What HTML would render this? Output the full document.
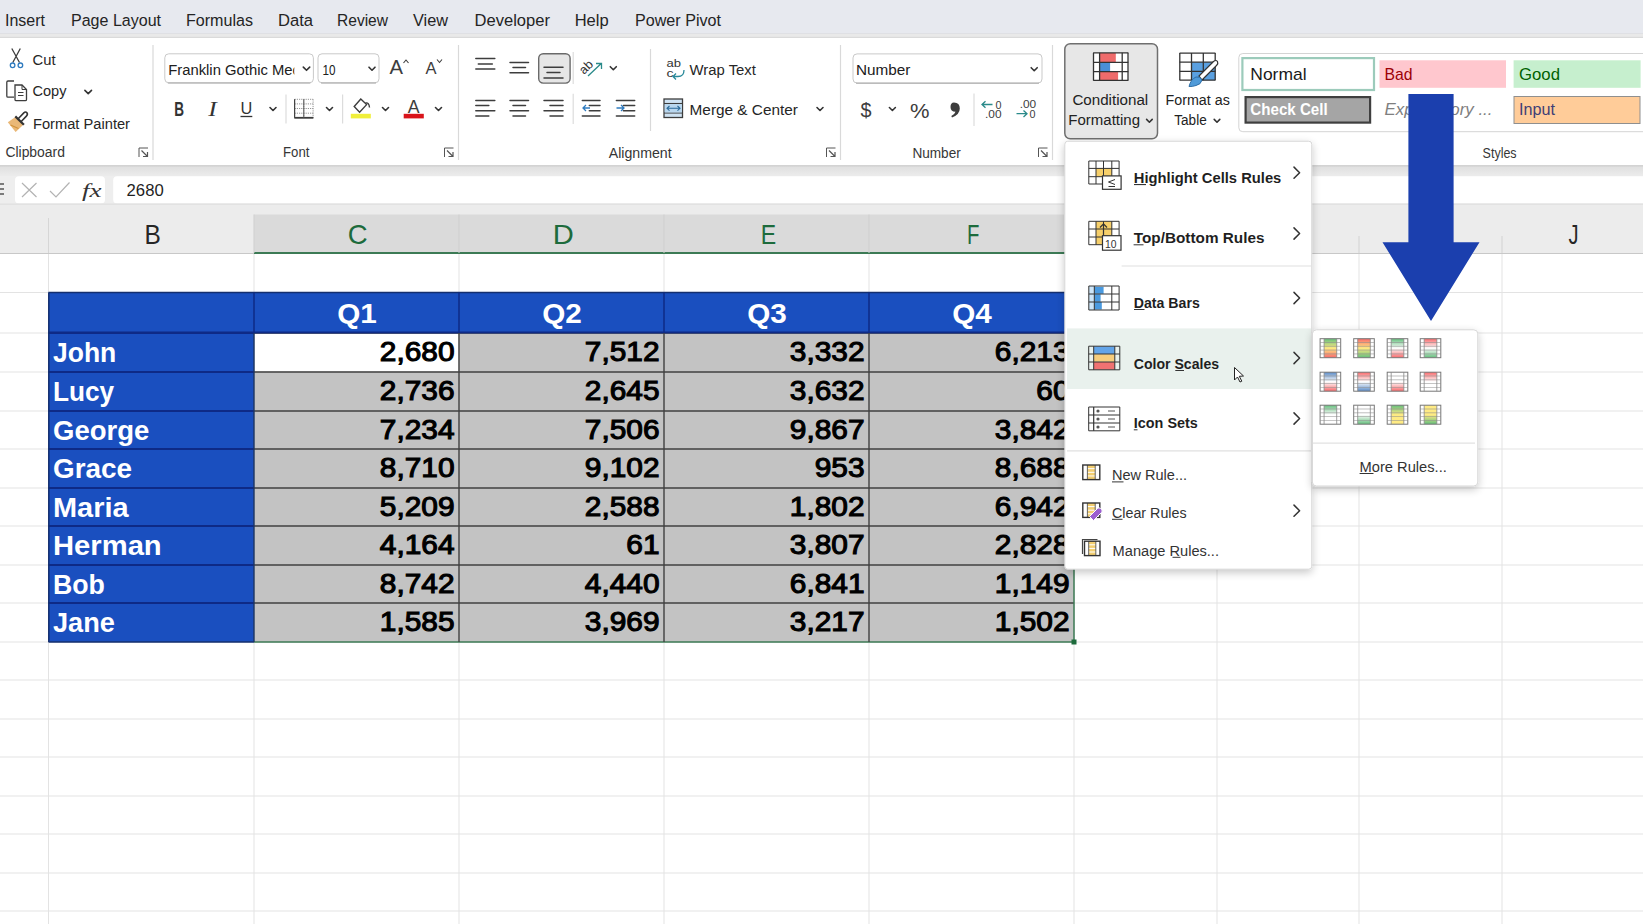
<!DOCTYPE html>
<html><head><meta charset="utf-8">
<style>
html,body{margin:0;padding:0;}
body{width:1643px;height:924px;overflow:hidden;background:#fff;}
svg{display:block;font-family:'Liberation Sans',sans-serif;}
</style></head><body>
<svg width="1643" height="924" viewBox="0 0 1643 924">
<defs>
<filter id="sh" x="-10%" y="-10%" width="130%" height="130%"><feGaussianBlur in="SourceAlpha" stdDeviation="4"/><feOffset dx="0" dy="3"/><feComponentTransfer><feFuncA type="linear" slope="0.22"/></feComponentTransfer><feMerge><feMergeNode/><feMergeNode in="SourceGraphic"/></feMerge></filter>
</defs>

<rect x="0" y="0" width="1643" height="38" fill="#e7e9ef"/>
<rect x="0" y="33" width="1643" height="5" fill="#e9e9e9"/>
<rect x="0" y="33" width="1643" height="1" fill="#dfe0e4"/>
<rect x="0" y="36.8" width="1643" height="1.4" fill="#dadada"/>
<text x="5" y="26" font-size="17.4" fill="#242424" textLength="40" lengthAdjust="spacingAndGlyphs">Insert</text>
<text x="71" y="26" font-size="17.4" fill="#242424" textLength="90" lengthAdjust="spacingAndGlyphs">Page Layout</text>
<text x="186" y="26" font-size="17.4" fill="#242424" textLength="67" lengthAdjust="spacingAndGlyphs">Formulas</text>
<text x="278" y="26" font-size="17.4" fill="#242424" textLength="35" lengthAdjust="spacingAndGlyphs">Data</text>
<text x="337" y="26" font-size="17.4" fill="#242424" textLength="51" lengthAdjust="spacingAndGlyphs">Review</text>
<text x="413" y="26" font-size="17.4" fill="#242424" textLength="35" lengthAdjust="spacingAndGlyphs">View</text>
<text x="474.5" y="26" font-size="17.4" fill="#242424" textLength="75.5" lengthAdjust="spacingAndGlyphs">Developer</text>
<text x="574.7" y="26" font-size="17.4" fill="#242424" textLength="34" lengthAdjust="spacingAndGlyphs">Help</text>
<text x="635" y="26" font-size="17.4" fill="#242424" textLength="86" lengthAdjust="spacingAndGlyphs">Power Pivot</text>
<rect x="0" y="38" width="1643" height="127.5" fill="#ffffff"/>
<linearGradient id="band" x1="0" y1="0" x2="0" y2="1"><stop offset="0" stop-color="#dedede"/><stop offset="1" stop-color="#ececec"/></linearGradient>
<rect x="0" y="165.5" width="1643" height="10.5" fill="url(#band)"/>
<rect x="0" y="165" width="1643" height="1.6" fill="#d3d3d3"/>
<line x1="153" y1="45" x2="153" y2="160" stroke="#d9d9d9" stroke-width="1.2"/>
<line x1="458.5" y1="45" x2="458.5" y2="160" stroke="#d9d9d9" stroke-width="1.2"/>
<line x1="840.5" y1="45" x2="840.5" y2="160" stroke="#d9d9d9" stroke-width="1.2"/>
<line x1="1052.5" y1="45" x2="1052.5" y2="160" stroke="#d9d9d9" stroke-width="1.2"/>
<line x1="650.5" y1="49" x2="650.5" y2="131" stroke="#d9d9d9" stroke-width="1.2"/>
<text x="5.4" y="157" font-size="13.8" fill="#363636" textLength="59.6" lengthAdjust="spacingAndGlyphs">Clipboard</text>
<text x="283" y="157" font-size="13.8" fill="#363636" textLength="26.4" lengthAdjust="spacingAndGlyphs">Font</text>
<text x="608.7" y="157.5" font-size="13.8" fill="#363636" textLength="63" lengthAdjust="spacingAndGlyphs">Alignment</text>
<text x="912.4" y="157.5" font-size="13.8" fill="#363636" textLength="48.4" lengthAdjust="spacingAndGlyphs">Number</text>
<text x="1482.6" y="158" font-size="13.8" fill="#363636" textLength="34" lengthAdjust="spacingAndGlyphs">Styles</text>
<path d="M139.0 157.0 V148.0 H148.0" fill="none" stroke="#555" stroke-width="1"/>
<path d="M141.5 150.5 L147.5 156.5 M147.5 152.0 V156.5 H143.0" fill="none" stroke="#555" stroke-width="1.2"/>
<path d="M444.5 157.0 V148.0 H453.5" fill="none" stroke="#555" stroke-width="1"/>
<path d="M447 150.5 L453 156.5 M453 152.0 V156.5 H448.5" fill="none" stroke="#555" stroke-width="1.2"/>
<path d="M826.5 157.0 V148.0 H835.5" fill="none" stroke="#555" stroke-width="1"/>
<path d="M829 150.5 L835 156.5 M835 152.0 V156.5 H830.5" fill="none" stroke="#555" stroke-width="1.2"/>
<path d="M1038.5 157.0 V148.0 H1047.5" fill="none" stroke="#555" stroke-width="1"/>
<path d="M1041 150.5 L1047 156.5 M1047 152.0 V156.5 H1042.5" fill="none" stroke="#555" stroke-width="1.2"/>
<path d="M11.8 48.5 L19.5 62.5 M20.3 48.5 L12.8 62.5" fill="none" stroke="#3d3d3d" stroke-width="1.3"/>
<circle cx="12.6" cy="65.3" r="2.3" fill="none" stroke="#2f7bbf" stroke-width="1.3"/>
<circle cx="20.4" cy="65.3" r="2.3" fill="none" stroke="#2f7bbf" stroke-width="1.3"/>
<text x="32.5" y="64.6" font-size="15.5" fill="#262626" textLength="23" lengthAdjust="spacingAndGlyphs">Cut</text>
<path d="M14 81 H8 Q6.8 81 6.8 82.2 V96 Q6.8 97.2 8 97.2 H14" fill="none" stroke="#3d3d3d" stroke-width="1.3"/>
<path d="M15 85 H22 L26.5 89.5 V99.5 Q26.5 100.7 25.3 100.7 H16.2 Q15 100.7 15 99.5 Z" fill="#fff" stroke="#3d3d3d" stroke-width="1.3"/>
<path d="M22 85 V89.5 H26.5 M18 92.5 H23.5 M18 95.5 H23.5" fill="none" stroke="#3d3d3d" stroke-width="1"/>
<text x="32.5" y="96.2" font-size="15.5" fill="#262626" textLength="34" lengthAdjust="spacingAndGlyphs">Copy</text>
<path d="M84.9 90.35 L88.2 93.65 L91.5 90.35" fill="none" stroke="#333" stroke-width="1.6" stroke-linecap="round" stroke-linejoin="round"/>
<path d="M7.8 122.3 L15.8 116.8 L23.6 124.4 L15.6 132 Z" fill="#eab877" stroke="none" stroke-width="1"/>
<path d="M10.5 125 L18.5 128.5" fill="none" stroke="#d2923a" stroke-width="1.2"/>
<path d="M18.2 118.8 L23.8 112.9 Q25.6 111.3 26.9 112.8 Q28.1 114.4 26.4 116.1 L21 121.7" fill="#fff" stroke="#333" stroke-width="1.6"/>
<path d="M15.3 116.4 L23.9 124.8" fill="none" stroke="#333" stroke-width="2.2"/>
<text x="33" y="129.3" font-size="15.5" fill="#262626" textLength="97" lengthAdjust="spacingAndGlyphs">Format Painter</text>
<rect x="164.8" y="53.8" width="148.6" height="29" rx="4" fill="#fff" stroke="#c9c9c9" stroke-width="1"/>
<line x1="167.8" y1="83.0" x2="310.4" y2="83.0" stroke="#a8a8a8" stroke-width="1"/>
<rect x="318" y="53.8" width="61" height="29" rx="4" fill="#fff" stroke="#c9c9c9" stroke-width="1"/>
<line x1="321" y1="83.0" x2="376" y2="83.0" stroke="#a8a8a8" stroke-width="1"/>
<clipPath id="fclip"><rect x="160" y="50" width="134.3" height="40"/></clipPath>
<g clip-path="url(#fclip)">
<text x="168.2" y="74.6" font-size="15.5" fill="#202020" textLength="132.6" lengthAdjust="spacingAndGlyphs">Franklin Gothic Med</text>
</g>
<path d="M303.3 67.10000000000001 L306.5 70.3 L309.7 67.10000000000001" fill="none" stroke="#333" stroke-width="1.6" stroke-linecap="round" stroke-linejoin="round"/>
<text x="322.5" y="74.6" font-size="15.5" fill="#202020" textLength="13" lengthAdjust="spacingAndGlyphs">10</text>
<path d="M369.0 67.2 L372 70.2 L375.0 67.2" fill="none" stroke="#333" stroke-width="1.6" stroke-linecap="round" stroke-linejoin="round"/>
<text x="389.5" y="74.2" font-size="21" fill="#3d3d3d" textLength="13.5" lengthAdjust="spacingAndGlyphs">A</text>
<path d="M403.5 63 L406 60 L408.5 63" fill="none" stroke="#3d3d3d" stroke-width="1.1"/>
<text x="425.5" y="74.2" font-size="16" fill="#3d3d3d" textLength="11" lengthAdjust="spacingAndGlyphs">A</text>
<path d="M437 59.5 L439.5 62.5 L442 59.5" fill="none" stroke="#3d3d3d" stroke-width="1.1"/>
<text x="174.3" y="116" font-size="20" fill="#333" font-weight="bold" textLength="9.8" lengthAdjust="spacingAndGlyphs">B</text>
<text x="208.3" y="116" font-size="20" fill="#333" font-style="italic" textLength="8.5" lengthAdjust="spacingAndGlyphs" font-family="Liberation Serif">I</text>
<text x="240.5" y="114" font-size="17" fill="#333" textLength="11.8" lengthAdjust="spacingAndGlyphs">U</text>
<line x1="240.5" y1="116.5" x2="252.3" y2="116.5" stroke="#333" stroke-width="1.3"/>
<path d="M270.0 107.5 L273 110.5 L276.0 107.5" fill="none" stroke="#333" stroke-width="1.6" stroke-linecap="round" stroke-linejoin="round"/>
<line x1="286" y1="94.5" x2="286" y2="123.5" stroke="#dcdcdc" stroke-width="1.2"/>
<line x1="294.6" y1="99.3" x2="294.6" y2="117.8" stroke="#8a8a8a" stroke-width="0.9" stroke-dasharray="1.2 1"/>
<line x1="303.8" y1="99.3" x2="303.8" y2="117.8" stroke="#8a8a8a" stroke-width="0.9" stroke-dasharray="1.2 1"/>
<line x1="313.1" y1="99.3" x2="313.1" y2="117.8" stroke="#8a8a8a" stroke-width="0.9" stroke-dasharray="1.2 1"/>
<line x1="294.6" y1="99.3" x2="313.1" y2="99.3" stroke="#8a8a8a" stroke-width="0.9" stroke-dasharray="1.2 1"/>
<line x1="294.6" y1="103.9" x2="313.1" y2="103.9" stroke="#8a8a8a" stroke-width="0.9" stroke-dasharray="1.2 1"/>
<line x1="294.6" y1="108.5" x2="313.1" y2="108.5" stroke="#8a8a8a" stroke-width="0.9" stroke-dasharray="1.2 1"/>
<line x1="294.6" y1="113.2" x2="313.1" y2="113.2" stroke="#8a8a8a" stroke-width="0.9" stroke-dasharray="1.2 1"/>
<line x1="294.3" y1="117.8" x2="313.4" y2="117.8" stroke="#3d3d3d" stroke-width="1.8"/>
<line x1="294.6" y1="99.3" x2="294.6" y2="117.8" stroke="#444" stroke-width="1.2"/>
<line x1="303.8" y1="99.3" x2="303.8" y2="117.8" stroke="#555" stroke-width="1.0"/>
<path d="M326.5 107.5 L329.5 110.5 L332.5 107.5" fill="none" stroke="#333" stroke-width="1.6" stroke-linecap="round" stroke-linejoin="round"/>
<line x1="342.6" y1="94.5" x2="342.6" y2="123.5" stroke="#dcdcdc" stroke-width="1.2"/>
<path d="M360.8 99 L354.2 106.6 L359.6 112.2 L366.6 104.6 Z" fill="#fff" stroke="#3d3d3d" stroke-width="1.4"/>
<path d="M365.5 103 Q369 102 369.5 107.5" fill="none" stroke="#3d3d3d" stroke-width="1.4"/>
<rect x="350.8" y="113.8" width="20" height="4.6" fill="#f0ef3a"/>
<path d="M382.5 107.5 L385.5 110.5 L388.5 107.5" fill="none" stroke="#333" stroke-width="1.6" stroke-linecap="round" stroke-linejoin="round"/>
<text x="407.8" y="112.5" font-size="17.5" fill="#3d3d3d" textLength="11.8" lengthAdjust="spacingAndGlyphs">A</text>
<rect x="403.7" y="113.8" width="20.1" height="4.6" fill="#d9141b"/>
<path d="M435.5 107.5 L438.5 110.5 L441.5 107.5" fill="none" stroke="#333" stroke-width="1.6" stroke-linecap="round" stroke-linejoin="round"/>
<line x1="475.8" y1="58.6" x2="494.8" y2="58.6" stroke="#3d3d3d" stroke-width="1.5" stroke-linecap="round"/>
<line x1="478.3" y1="63.9" x2="492.3" y2="63.9" stroke="#3d3d3d" stroke-width="1.5" stroke-linecap="round"/>
<line x1="475.8" y1="69" x2="494.8" y2="69" stroke="#3d3d3d" stroke-width="1.5" stroke-linecap="round"/>
<line x1="510" y1="62.4" x2="528.5" y2="62.4" stroke="#3d3d3d" stroke-width="1.5" stroke-linecap="round"/>
<line x1="513" y1="67.5" x2="525.5" y2="67.5" stroke="#3d3d3d" stroke-width="1.5" stroke-linecap="round"/>
<line x1="510" y1="72.8" x2="528.5" y2="72.8" stroke="#3d3d3d" stroke-width="1.5" stroke-linecap="round"/>
<rect x="538.7" y="53.7" width="31.4" height="29.4" rx="4.5" fill="#e6e6e6" stroke="#6a6a6a" stroke-width="1.4"/>
<line x1="544" y1="67.3" x2="563" y2="67.3" stroke="#3d3d3d" stroke-width="1.5" stroke-linecap="round"/>
<line x1="547" y1="72.5" x2="560" y2="72.5" stroke="#3d3d3d" stroke-width="1.5" stroke-linecap="round"/>
<line x1="544" y1="77.9" x2="563" y2="77.9" stroke="#3d3d3d" stroke-width="1.5" stroke-linecap="round"/>
<line x1="573.2" y1="52" x2="573.2" y2="84" stroke="#dcdcdc" stroke-width="1.2"/>
<line x1="573.2" y1="93.7" x2="573.2" y2="124" stroke="#dcdcdc" stroke-width="1.2"/>
<text x="0" y="0" font-size="12.5" fill="#333" transform="translate(584 75) rotate(-45)">ab</text>
<path d="M588 76 L601.5 63.3 M596 63.5 H601.5 V69" fill="none" stroke="#2a8a8a" stroke-width="1.3"/>
<path d="M610.3 66.7 L613.3 69.7 L616.3 66.7" fill="none" stroke="#333" stroke-width="1.6" stroke-linecap="round" stroke-linejoin="round"/>
<line x1="475.8" y1="100.4" x2="494.8" y2="100.4" stroke="#3d3d3d" stroke-width="1.5" stroke-linecap="round"/>
<line x1="475.8" y1="105.5" x2="488.8" y2="105.5" stroke="#3d3d3d" stroke-width="1.5" stroke-linecap="round"/>
<line x1="475.8" y1="110.7" x2="494.8" y2="110.7" stroke="#3d3d3d" stroke-width="1.5" stroke-linecap="round"/>
<line x1="475.8" y1="116" x2="488.8" y2="116" stroke="#3d3d3d" stroke-width="1.5" stroke-linecap="round"/>
<line x1="510" y1="100.4" x2="528.5" y2="100.4" stroke="#3d3d3d" stroke-width="1.5" stroke-linecap="round"/>
<line x1="513" y1="105.5" x2="525.5" y2="105.5" stroke="#3d3d3d" stroke-width="1.5" stroke-linecap="round"/>
<line x1="510" y1="110.7" x2="528.5" y2="110.7" stroke="#3d3d3d" stroke-width="1.5" stroke-linecap="round"/>
<line x1="513" y1="116" x2="525.5" y2="116" stroke="#3d3d3d" stroke-width="1.5" stroke-linecap="round"/>
<line x1="544" y1="100.4" x2="563" y2="100.4" stroke="#3d3d3d" stroke-width="1.5" stroke-linecap="round"/>
<line x1="550" y1="105.5" x2="563" y2="105.5" stroke="#3d3d3d" stroke-width="1.5" stroke-linecap="round"/>
<line x1="544" y1="110.7" x2="563" y2="110.7" stroke="#3d3d3d" stroke-width="1.5" stroke-linecap="round"/>
<line x1="550" y1="116" x2="563" y2="116" stroke="#3d3d3d" stroke-width="1.5" stroke-linecap="round"/>
<line x1="582.3" y1="100.4" x2="600.0" y2="100.4" stroke="#3d3d3d" stroke-width="1.5" stroke-linecap="round"/>
<line x1="589.3" y1="105.5" x2="600.0" y2="105.5" stroke="#3d3d3d" stroke-width="1.5" stroke-linecap="round"/>
<line x1="589.3" y1="110.7" x2="600.0" y2="110.7" stroke="#3d3d3d" stroke-width="1.5" stroke-linecap="round"/>
<line x1="582.3" y1="116" x2="600.0" y2="116" stroke="#3d3d3d" stroke-width="1.5" stroke-linecap="round"/>
<path d="M583 108 H590 M586 105 L583 108 L586 111" fill="none" stroke="#2f7bbf" stroke-width="1.3"/>
<line x1="616.4" y1="100.4" x2="634.6999999999999" y2="100.4" stroke="#3d3d3d" stroke-width="1.5" stroke-linecap="round"/>
<line x1="623.4" y1="105.5" x2="634.6999999999999" y2="105.5" stroke="#3d3d3d" stroke-width="1.5" stroke-linecap="round"/>
<line x1="623.4" y1="110.7" x2="634.6999999999999" y2="110.7" stroke="#3d3d3d" stroke-width="1.5" stroke-linecap="round"/>
<line x1="616.4" y1="116" x2="634.6999999999999" y2="116" stroke="#3d3d3d" stroke-width="1.5" stroke-linecap="round"/>
<path d="M616.5 108 H624 M621 105 L624 108 L621 111" fill="none" stroke="#2f7bbf" stroke-width="1.3"/>
<text x="666.4" y="67" font-size="11.5" fill="#333" textLength="14.5" lengthAdjust="spacingAndGlyphs">ab</text>
<text x="666.4" y="77.3" font-size="11.5" fill="#333" textLength="7" lengthAdjust="spacingAndGlyphs">c</text>
<path d="M684 70 Q684 76.5 678 76.5 H673 M676 73.5 L673 76.5 L676 79.5" fill="none" stroke="#2a8a9a" stroke-width="1.3"/>
<text x="689.6" y="74.8" font-size="15.5" fill="#262626" textLength="66.3" lengthAdjust="spacingAndGlyphs">Wrap Text</text>
<rect x="664" y="99" width="18.5" height="18.5" fill="#cfe3f3" stroke="#3d3d3d" stroke-width="1.3"/>
<line x1="664" y1="103.5" x2="682.5" y2="103.5" stroke="#3d3d3d" stroke-width="1.1"/>
<line x1="664" y1="113" x2="682.5" y2="113" stroke="#3d3d3d" stroke-width="1.1"/>
<rect x="664.7" y="104.2" width="17.1" height="8.2" fill="#b9d7ef"/>
<path d="M667 108.3 H680 M669.5 106 L667 108.3 L669.5 110.6 M677.5 106 L680 108.3 L677.5 110.6" fill="none" stroke="#2a6a9a" stroke-width="1.1"/>
<text x="689.6" y="115" font-size="15.5" fill="#262626" textLength="108.3" lengthAdjust="spacingAndGlyphs">Merge &amp; Center</text>
<path d="M817.0 107.5 L820 110.5 L823.0 107.5" fill="none" stroke="#333" stroke-width="1.6" stroke-linecap="round" stroke-linejoin="round"/>
<rect x="853" y="53.9" width="189" height="29.1" rx="4" fill="#fff" stroke="#c9c9c9" stroke-width="1"/>
<line x1="856" y1="83.2" x2="1039" y2="83.2" stroke="#a8a8a8" stroke-width="1"/>
<text x="856" y="75" font-size="15.5" fill="#202020" textLength="54.4" lengthAdjust="spacingAndGlyphs">Number</text>
<path d="M1031.2 67.7 L1034.2 70.7 L1037.2 67.7" fill="none" stroke="#333" stroke-width="1.6" stroke-linecap="round" stroke-linejoin="round"/>
<text x="860.5" y="117" font-size="21" fill="#3d3d3d" textLength="11" lengthAdjust="spacingAndGlyphs">$</text>
<path d="M889.4 107.5 L892.4 110.5 L895.4 107.5" fill="none" stroke="#333" stroke-width="1.6" stroke-linecap="round" stroke-linejoin="round"/>
<text x="910" y="117.6" font-size="21" fill="#3d3d3d" textLength="19.5" lengthAdjust="spacingAndGlyphs">%</text>
<path d="M954 102.5 Q959.8 102.5 959.8 108.5 Q959.8 114.5 952 117.5 L951.3 116 Q955 114 955.5 111.8 Q950.5 111.5 950.5 107 Q950.5 102.5 954 102.5 Z" fill="#3d3d3d" stroke="none" stroke-width="1"/>
<line x1="974" y1="93.4" x2="974" y2="126" stroke="#dcdcdc" stroke-width="1.2"/>
<path d="M982 104.5 H992.5 M985.5 101.3 L982 104.5 L985.5 107.7" fill="none" stroke="#2a8a8a" stroke-width="1.3"/>
<text x="995.5" y="108.5" font-size="11.5" fill="#3d3d3d" textLength="6" lengthAdjust="spacingAndGlyphs">0</text>
<text x="985" y="117.6" font-size="11.5" fill="#3d3d3d" textLength="16.5" lengthAdjust="spacingAndGlyphs">.00</text>
<text x="1019.7" y="108.3" font-size="11.5" fill="#3d3d3d" textLength="16.5" lengthAdjust="spacingAndGlyphs">.00</text>
<path d="M1016.5 113.7 H1027 M1023.5 110.5 L1027 113.7 L1023.5 116.9" fill="none" stroke="#2a8a8a" stroke-width="1.3"/>
<text x="1029.5" y="117.6" font-size="11.5" fill="#3d3d3d" textLength="6" lengthAdjust="spacingAndGlyphs">0</text>
<rect x="1064.8" y="43.7" width="92.7" height="95.1" rx="5.5" fill="#e7e7e7" stroke="#6f6f6f" stroke-width="1.5"/>
<rect x="1093.5" y="53" width="34.5" height="27.3" fill="#fff"/>
<rect x="1099.6" y="53" width="16.2" height="9.3" fill="#ef6b6b"/>
<rect x="1099.6" y="62.3" width="10.5" height="9.3" fill="#4a8ed6"/>
<rect x="1099.6" y="71.6" width="18.5" height="8.7" fill="#ef6b6b"/>
<line x1="1093.5" y1="52.8" x2="1093.5" y2="80.5" stroke="#333" stroke-width="1.3"/>
<line x1="1099.6" y1="52.8" x2="1099.6" y2="80.5" stroke="#333" stroke-width="1.3"/>
<line x1="1122.2" y1="52.8" x2="1122.2" y2="80.5" stroke="#333" stroke-width="1.3"/>
<line x1="1128" y1="52.8" x2="1128" y2="80.5" stroke="#333" stroke-width="1.3"/>
<line x1="1093.2" y1="52.8" x2="1128.3" y2="52.8" stroke="#333" stroke-width="1.3"/>
<line x1="1093.2" y1="62.3" x2="1128.3" y2="62.3" stroke="#333" stroke-width="1.3"/>
<line x1="1093.2" y1="71.6" x2="1128.3" y2="71.6" stroke="#333" stroke-width="1.3"/>
<line x1="1093.2" y1="80.3" x2="1128.3" y2="80.3" stroke="#333" stroke-width="1.3"/>
<text x="1072.4" y="105.2" font-size="15.5" fill="#222" textLength="75.8" lengthAdjust="spacingAndGlyphs">Conditional</text>
<text x="1068.3" y="124.8" font-size="15.5" fill="#222" textLength="71.7" lengthAdjust="spacingAndGlyphs">Formatting</text>
<path d="M1146.6000000000001 119.39999999999999 L1149.4 122.2 L1152.2 119.39999999999999" fill="none" stroke="#333" stroke-width="1.6" stroke-linecap="round" stroke-linejoin="round"/>
<rect x="1179.8" y="53.2" width="35.5" height="27" fill="#fff"/>
<rect x="1191.5" y="62.2" width="23.7" height="18" fill="#5aa0e0"/>
<line x1="1179.8" y1="53" x2="1179.8" y2="80.3" stroke="#333" stroke-width="1.3"/>
<line x1="1191.5" y1="53" x2="1191.5" y2="80.3" stroke="#333" stroke-width="1.3"/>
<line x1="1203.3" y1="53" x2="1203.3" y2="80.3" stroke="#333" stroke-width="1.3"/>
<line x1="1215.2" y1="53" x2="1215.2" y2="80.3" stroke="#333" stroke-width="1.3"/>
<line x1="1179.6" y1="53.2" x2="1215.4" y2="53.2" stroke="#333" stroke-width="1.3"/>
<line x1="1179.6" y1="62.2" x2="1215.4" y2="62.2" stroke="#333" stroke-width="1.3"/>
<line x1="1179.6" y1="71.3" x2="1215.4" y2="71.3" stroke="#333" stroke-width="1.3"/>
<line x1="1179.6" y1="80.2" x2="1215.4" y2="80.2" stroke="#333" stroke-width="1.3"/>
<path d="M1199 76 L1213.5 61.5 Q1216 59.5 1217.5 61.5 Q1218.5 63.5 1216.5 65.5 L1202 80 Z" fill="#fff" stroke="#333" stroke-width="1.2"/>
<path d="M1189 86.5 Q1191 79 1196 77 Q1200 76 1202 80 Q1201 84.5 1196 85.5 Q1192 86.8 1189 86.5 Z" fill="#4f9ad8" stroke="#2f6fa8" stroke-width="1"/>
<text x="1165.6" y="105.2" font-size="15.5" fill="#222" textLength="64.2" lengthAdjust="spacingAndGlyphs">Format as</text>
<text x="1174.3" y="124.8" font-size="15.5" fill="#222" textLength="32.4" lengthAdjust="spacingAndGlyphs">Table</text>
<path d="M1214.2 119.39999999999999 L1217 122.2 L1219.8 119.39999999999999" fill="none" stroke="#333" stroke-width="1.6" stroke-linecap="round" stroke-linejoin="round"/>
<rect x="1238.8" y="53.5" width="420" height="78.2" rx="4" fill="#fff" stroke="#d4d4d4" stroke-width="1"/>
<rect x="1242.4" y="58.1" width="131.6" height="31.9" fill="#fff" stroke="#9ccbbb" stroke-width="2.2"/>
<text x="1250.3" y="79.5" font-size="17" fill="#1a1a1a" textLength="56.3" lengthAdjust="spacingAndGlyphs">Normal</text>
<rect x="1379.5" y="60.3" width="126.5" height="27.5" fill="#ffc7ce"/>
<text x="1384.5" y="79.5" font-size="17" fill="#9c0006" textLength="28" lengthAdjust="spacingAndGlyphs">Bad</text>
<rect x="1513.6" y="60.3" width="127" height="27.5" fill="#c6efce"/>
<text x="1519" y="79.5" font-size="17" fill="#006100" textLength="41" lengthAdjust="spacingAndGlyphs">Good</text>
<rect x="1245.6" y="97.1" width="124.5" height="25.5" fill="#a5a5a5" stroke="#3f3f3f" stroke-width="2.2"/>
<text x="1250.3" y="114.7" font-size="17" fill="#ffffff" font-weight="bold" textLength="77.4" lengthAdjust="spacingAndGlyphs">Check Cell</text>
<text x="1384.5" y="114.7" font-size="17" fill="#7f7f7f" font-style="italic" textLength="108" lengthAdjust="spacingAndGlyphs">Explanatory ...</text>
<rect x="1514" y="96.5" width="126" height="27" fill="#ffcc99" stroke="#8f8f8f" stroke-width="1"/>
<text x="1519" y="114.7" font-size="17" fill="#3f3f76" textLength="36" lengthAdjust="spacingAndGlyphs">Input</text>
<rect x="0" y="176" width="1643" height="31" fill="#eeeeee"/>
<rect x="15" y="176.2" width="90" height="27.4" rx="4" fill="#fff"/>
<rect x="113.2" y="176.2" width="1600" height="27.4" rx="4" fill="#fff"/>
<line x1="0" y1="184" x2="4" y2="184" stroke="#555" stroke-width="1.5"/>
<line x1="0" y1="189" x2="4" y2="189" stroke="#555" stroke-width="1.5"/>
<line x1="0" y1="194" x2="4" y2="194" stroke="#555" stroke-width="1.5"/>
<path d="M22 183 L36.5 197 M36.5 183 L22 197" fill="none" stroke="#b3b3b3" stroke-width="1.2"/>
<path d="M50 191 L56 197 L69.5 182.5" fill="none" stroke="#b3b3b3" stroke-width="1.2"/>
<text x="82" y="196.5" font-size="19" fill="#333" font-style="italic" textLength="19.5" lengthAdjust="spacingAndGlyphs" font-family="Liberation Serif">fx</text>
<text x="126.6" y="196.3" font-size="16" fill="#1f1f1f" textLength="37.1" lengthAdjust="spacingAndGlyphs">2680</text>
<rect x="0" y="203.6" width="1643" height="50.4" fill="#ececec"/>
<rect x="0" y="203.6" width="1643" height="1.2" fill="#dfdfdf"/>
<rect x="254" y="214.5" width="810" height="39" fill="#dadada"/>
<line x1="0" y1="253.5" x2="1643" y2="253.5" stroke="#c8c8c8" stroke-width="1"/>
<line x1="254" y1="253" x2="1074" y2="253" stroke="#3c7a55" stroke-width="2"/>
<line x1="254" y1="214.5" x2="254" y2="253" stroke="#cfcfcf" stroke-width="1"/>
<line x1="459" y1="214.5" x2="459" y2="253" stroke="#cfcfcf" stroke-width="1"/>
<line x1="664" y1="214.5" x2="664" y2="253" stroke="#cfcfcf" stroke-width="1"/>
<line x1="869" y1="214.5" x2="869" y2="253" stroke="#cfcfcf" stroke-width="1"/>
<line x1="48.5" y1="218" x2="48.5" y2="253" stroke="#d6d6d6" stroke-width="1"/>
<line x1="1074" y1="236" x2="1074" y2="253" stroke="#d2d2d2" stroke-width="1"/>
<line x1="1217" y1="236" x2="1217" y2="253" stroke="#d2d2d2" stroke-width="1"/>
<line x1="1359" y1="236" x2="1359" y2="253" stroke="#d2d2d2" stroke-width="1"/>
<line x1="1502" y1="236" x2="1502" y2="253" stroke="#d2d2d2" stroke-width="1"/>
<text transform="translate(152.7 243.7) scale(0.89 1)" font-size="27.5" fill="#262626" text-anchor="middle">B</text>
<text transform="translate(357.7 243.7) scale(1.0 1)" font-size="27.5" fill="#1d6b3c" text-anchor="middle">C</text>
<text transform="translate(563.2 243.7) scale(1.06 1)" font-size="27.5" fill="#1d6b3c" text-anchor="middle">D</text>
<text transform="translate(768.5 243.7) scale(0.84 1)" font-size="27.5" fill="#1d6b3c" text-anchor="middle">E</text>
<text transform="translate(973.2 243.7) scale(0.74 1)" font-size="27.5" fill="#1d6b3c" text-anchor="middle">F</text>
<text transform="translate(1573.5 243.7) scale(0.73 1)" font-size="27.5" fill="#262626" text-anchor="middle">J</text>
<line x1="48.5" y1="254" x2="48.5" y2="924" stroke="#e3e3e3" stroke-width="1"/>
<line x1="254" y1="254" x2="254" y2="924" stroke="#e3e3e3" stroke-width="1"/>
<line x1="459" y1="254" x2="459" y2="924" stroke="#e3e3e3" stroke-width="1"/>
<line x1="664" y1="254" x2="664" y2="924" stroke="#e3e3e3" stroke-width="1"/>
<line x1="869" y1="254" x2="869" y2="924" stroke="#e3e3e3" stroke-width="1"/>
<line x1="1074" y1="254" x2="1074" y2="924" stroke="#e3e3e3" stroke-width="1"/>
<line x1="1217" y1="254" x2="1217" y2="924" stroke="#e3e3e3" stroke-width="1"/>
<line x1="1359" y1="254" x2="1359" y2="924" stroke="#e3e3e3" stroke-width="1"/>
<line x1="1502" y1="254" x2="1502" y2="924" stroke="#e3e3e3" stroke-width="1"/>
<line x1="0" y1="292.5" x2="1643" y2="292.5" stroke="#e3e3e3" stroke-width="1"/>
<line x1="0" y1="333" x2="1643" y2="333" stroke="#e3e3e3" stroke-width="1"/>
<line x1="0" y1="372" x2="1643" y2="372" stroke="#e3e3e3" stroke-width="1"/>
<line x1="0" y1="411" x2="1643" y2="411" stroke="#e3e3e3" stroke-width="1"/>
<line x1="0" y1="449" x2="1643" y2="449" stroke="#e3e3e3" stroke-width="1"/>
<line x1="0" y1="488" x2="1643" y2="488" stroke="#e3e3e3" stroke-width="1"/>
<line x1="0" y1="526" x2="1643" y2="526" stroke="#e3e3e3" stroke-width="1"/>
<line x1="0" y1="565" x2="1643" y2="565" stroke="#e3e3e3" stroke-width="1"/>
<line x1="0" y1="603" x2="1643" y2="603" stroke="#e3e3e3" stroke-width="1"/>
<line x1="0" y1="642" x2="1643" y2="642" stroke="#e3e3e3" stroke-width="1"/>
<line x1="0" y1="680" x2="1643" y2="680" stroke="#e3e3e3" stroke-width="1"/>
<line x1="0" y1="719" x2="1643" y2="719" stroke="#e3e3e3" stroke-width="1"/>
<line x1="0" y1="757" x2="1643" y2="757" stroke="#e3e3e3" stroke-width="1"/>
<line x1="0" y1="796" x2="1643" y2="796" stroke="#e3e3e3" stroke-width="1"/>
<line x1="0" y1="834" x2="1643" y2="834" stroke="#e3e3e3" stroke-width="1"/>
<line x1="0" y1="873" x2="1643" y2="873" stroke="#e3e3e3" stroke-width="1"/>
<line x1="0" y1="911" x2="1643" y2="911" stroke="#e3e3e3" stroke-width="1"/>
<rect x="48.5" y="292.5" width="205.5" height="349.5" fill="#1a4fbf"/>
<rect x="254" y="292.5" width="820" height="40.5" fill="#1a4fbf"/>
<rect x="254" y="333" width="820" height="309" fill="#c3c3c3"/>
<rect x="254.5" y="333.5" width="204" height="38" fill="#ffffff"/>
<line x1="48.5" y1="333" x2="254" y2="333" stroke="#0e2a86" stroke-width="1.8"/>
<line x1="254" y1="333" x2="1074" y2="333" stroke="#404040" stroke-width="1.4"/>
<line x1="48.5" y1="372" x2="254" y2="372" stroke="#0e2a86" stroke-width="1.8"/>
<line x1="254" y1="372" x2="1074" y2="372" stroke="#404040" stroke-width="1.4"/>
<line x1="48.5" y1="411" x2="254" y2="411" stroke="#0e2a86" stroke-width="1.8"/>
<line x1="254" y1="411" x2="1074" y2="411" stroke="#404040" stroke-width="1.4"/>
<line x1="48.5" y1="449" x2="254" y2="449" stroke="#0e2a86" stroke-width="1.8"/>
<line x1="254" y1="449" x2="1074" y2="449" stroke="#404040" stroke-width="1.4"/>
<line x1="48.5" y1="488" x2="254" y2="488" stroke="#0e2a86" stroke-width="1.8"/>
<line x1="254" y1="488" x2="1074" y2="488" stroke="#404040" stroke-width="1.4"/>
<line x1="48.5" y1="526" x2="254" y2="526" stroke="#0e2a86" stroke-width="1.8"/>
<line x1="254" y1="526" x2="1074" y2="526" stroke="#404040" stroke-width="1.4"/>
<line x1="48.5" y1="565" x2="254" y2="565" stroke="#0e2a86" stroke-width="1.8"/>
<line x1="254" y1="565" x2="1074" y2="565" stroke="#404040" stroke-width="1.4"/>
<line x1="48.5" y1="603" x2="254" y2="603" stroke="#0e2a86" stroke-width="1.8"/>
<line x1="254" y1="603" x2="1074" y2="603" stroke="#404040" stroke-width="1.4"/>
<line x1="48.5" y1="292.5" x2="1074" y2="292.5" stroke="#142f6e" stroke-width="1.5"/>
<line x1="48.5" y1="332.5" x2="1074" y2="332.5" stroke="#0e2a86" stroke-width="2"/>
<line x1="48.5" y1="642" x2="254" y2="642" stroke="#142f6e" stroke-width="1.5"/>
<line x1="254" y1="642" x2="1074" y2="642" stroke="#3c7a55" stroke-width="1.5"/>
<line x1="48.8" y1="292.5" x2="48.8" y2="642" stroke="#142f6e" stroke-width="1.5"/>
<line x1="254" y1="292.5" x2="254" y2="333" stroke="#0e2a86" stroke-width="1.5"/>
<line x1="254" y1="333" x2="254" y2="642" stroke="#1e3560" stroke-width="1.4"/>
<line x1="459" y1="292.5" x2="459" y2="333" stroke="#0e2a86" stroke-width="1.5"/>
<line x1="459" y1="333" x2="459" y2="642" stroke="#404040" stroke-width="1.4"/>
<line x1="664" y1="292.5" x2="664" y2="333" stroke="#0e2a86" stroke-width="1.5"/>
<line x1="664" y1="333" x2="664" y2="642" stroke="#404040" stroke-width="1.4"/>
<line x1="869" y1="292.5" x2="869" y2="333" stroke="#0e2a86" stroke-width="1.5"/>
<line x1="869" y1="333" x2="869" y2="642" stroke="#404040" stroke-width="1.4"/>
<line x1="1074" y1="292.5" x2="1074" y2="642" stroke="#3c7a55" stroke-width="1.5"/>
<rect x="1071.5" y="639.5" width="5" height="5" fill="#1d6b3c"/>
<text transform="translate(357.0 323) scale(1.08 1)" font-size="27.5" font-weight="bold" fill="#fff" text-anchor="middle">Q1</text>
<text transform="translate(562.0 323) scale(1.08 1)" font-size="27.5" font-weight="bold" fill="#fff" text-anchor="middle">Q2</text>
<text transform="translate(767.0 323) scale(1.08 1)" font-size="27.5" font-weight="bold" fill="#fff" text-anchor="middle">Q3</text>
<text transform="translate(972.0 323) scale(1.08 1)" font-size="27.5" font-weight="bold" fill="#fff" text-anchor="middle">Q4</text>
<text x="53" y="362" font-size="27.5" fill="#fff" font-weight="bold" textLength="63.3" lengthAdjust="spacingAndGlyphs">John</text>
<text transform="translate(454.5 361) scale(1.085 1)" font-size="27.5" fill="#000" stroke="#000" stroke-width="1.1" text-anchor="end">2,680</text>
<text transform="translate(659.5 361) scale(1.085 1)" font-size="27.5" fill="#000" stroke="#000" stroke-width="1.1" text-anchor="end">7,512</text>
<text transform="translate(864.5 361) scale(1.085 1)" font-size="27.5" fill="#000" stroke="#000" stroke-width="1.1" text-anchor="end">3,332</text>
<text transform="translate(1069.5 361) scale(1.085 1)" font-size="27.5" fill="#000" stroke="#000" stroke-width="1.1" text-anchor="end">6,213</text>
<text x="53" y="401" font-size="27.5" fill="#fff" font-weight="bold" textLength="61.1" lengthAdjust="spacingAndGlyphs">Lucy</text>
<text transform="translate(454.5 400) scale(1.085 1)" font-size="27.5" fill="#000" stroke="#000" stroke-width="1.1" text-anchor="end">2,736</text>
<text transform="translate(659.5 400) scale(1.085 1)" font-size="27.5" fill="#000" stroke="#000" stroke-width="1.1" text-anchor="end">2,645</text>
<text transform="translate(864.5 400) scale(1.085 1)" font-size="27.5" fill="#000" stroke="#000" stroke-width="1.1" text-anchor="end">3,632</text>
<text transform="translate(1069.5 400) scale(1.085 1)" font-size="27.5" fill="#000" stroke="#000" stroke-width="1.1" text-anchor="end">60</text>
<text x="53" y="440" font-size="27.5" fill="#fff" font-weight="bold" textLength="96.3" lengthAdjust="spacingAndGlyphs">George</text>
<text transform="translate(454.5 439) scale(1.085 1)" font-size="27.5" fill="#000" stroke="#000" stroke-width="1.1" text-anchor="end">7,234</text>
<text transform="translate(659.5 439) scale(1.085 1)" font-size="27.5" fill="#000" stroke="#000" stroke-width="1.1" text-anchor="end">7,506</text>
<text transform="translate(864.5 439) scale(1.085 1)" font-size="27.5" fill="#000" stroke="#000" stroke-width="1.1" text-anchor="end">9,867</text>
<text transform="translate(1069.5 439) scale(1.085 1)" font-size="27.5" fill="#000" stroke="#000" stroke-width="1.1" text-anchor="end">3,842</text>
<text x="53" y="478" font-size="27.5" fill="#fff" font-weight="bold" textLength="79" lengthAdjust="spacingAndGlyphs">Grace</text>
<text transform="translate(454.5 477) scale(1.085 1)" font-size="27.5" fill="#000" stroke="#000" stroke-width="1.1" text-anchor="end">8,710</text>
<text transform="translate(659.5 477) scale(1.085 1)" font-size="27.5" fill="#000" stroke="#000" stroke-width="1.1" text-anchor="end">9,102</text>
<text transform="translate(864.5 477) scale(1.085 1)" font-size="27.5" fill="#000" stroke="#000" stroke-width="1.1" text-anchor="end">953</text>
<text transform="translate(1069.5 477) scale(1.085 1)" font-size="27.5" fill="#000" stroke="#000" stroke-width="1.1" text-anchor="end">8,688</text>
<text x="53" y="517" font-size="27.5" fill="#fff" font-weight="bold" textLength="75.6" lengthAdjust="spacingAndGlyphs">Maria</text>
<text transform="translate(454.5 516) scale(1.085 1)" font-size="27.5" fill="#000" stroke="#000" stroke-width="1.1" text-anchor="end">5,209</text>
<text transform="translate(659.5 516) scale(1.085 1)" font-size="27.5" fill="#000" stroke="#000" stroke-width="1.1" text-anchor="end">2,588</text>
<text transform="translate(864.5 516) scale(1.085 1)" font-size="27.5" fill="#000" stroke="#000" stroke-width="1.1" text-anchor="end">1,802</text>
<text transform="translate(1069.5 516) scale(1.085 1)" font-size="27.5" fill="#000" stroke="#000" stroke-width="1.1" text-anchor="end">6,942</text>
<text x="53" y="555" font-size="27.5" fill="#fff" font-weight="bold" textLength="108.7" lengthAdjust="spacingAndGlyphs">Herman</text>
<text transform="translate(454.5 554) scale(1.085 1)" font-size="27.5" fill="#000" stroke="#000" stroke-width="1.1" text-anchor="end">4,164</text>
<text transform="translate(659.5 554) scale(1.085 1)" font-size="27.5" fill="#000" stroke="#000" stroke-width="1.1" text-anchor="end">61</text>
<text transform="translate(864.5 554) scale(1.085 1)" font-size="27.5" fill="#000" stroke="#000" stroke-width="1.1" text-anchor="end">3,807</text>
<text transform="translate(1069.5 554) scale(1.085 1)" font-size="27.5" fill="#000" stroke="#000" stroke-width="1.1" text-anchor="end">2,828</text>
<text x="53" y="594" font-size="27.5" fill="#fff" font-weight="bold" textLength="51.9" lengthAdjust="spacingAndGlyphs">Bob</text>
<text transform="translate(454.5 593) scale(1.085 1)" font-size="27.5" fill="#000" stroke="#000" stroke-width="1.1" text-anchor="end">8,742</text>
<text transform="translate(659.5 593) scale(1.085 1)" font-size="27.5" fill="#000" stroke="#000" stroke-width="1.1" text-anchor="end">4,440</text>
<text transform="translate(864.5 593) scale(1.085 1)" font-size="27.5" fill="#000" stroke="#000" stroke-width="1.1" text-anchor="end">6,841</text>
<text transform="translate(1069.5 593) scale(1.085 1)" font-size="27.5" fill="#000" stroke="#000" stroke-width="1.1" text-anchor="end">1,149</text>
<text x="53" y="632" font-size="27.5" fill="#fff" font-weight="bold" textLength="61.9" lengthAdjust="spacingAndGlyphs">Jane</text>
<text transform="translate(454.5 631) scale(1.085 1)" font-size="27.5" fill="#000" stroke="#000" stroke-width="1.1" text-anchor="end">1,585</text>
<text transform="translate(659.5 631) scale(1.085 1)" font-size="27.5" fill="#000" stroke="#000" stroke-width="1.1" text-anchor="end">3,969</text>
<text transform="translate(864.5 631) scale(1.085 1)" font-size="27.5" fill="#000" stroke="#000" stroke-width="1.1" text-anchor="end">3,217</text>
<text transform="translate(1069.5 631) scale(1.085 1)" font-size="27.5" fill="#000" stroke="#000" stroke-width="1.1" text-anchor="end">1,502</text>
<g filter="url(#sh)">
<rect x="1064.8" y="141.2" width="247" height="428" rx="3" fill="#fff" stroke="#d6d6d6" stroke-width="1"/>
</g>
<rect x="1067" y="328.4" width="244" height="60.6" fill="#e9f1ed"/>
<line x1="1121.6" y1="266" x2="1311" y2="266" stroke="#e0e0e0" stroke-width="1.2"/>
<line x1="1067" y1="450.8" x2="1311" y2="450.8" stroke="#e0e0e0" stroke-width="1.2"/>
<text x="1133.8" y="183.1" font-size="15.5" fill="#1f1f1f" font-weight="bold" textLength="147.5" lengthAdjust="spacingAndGlyphs">Highlight Cells Rules</text>
<line x1="1134" y1="184.6" x2="1146" y2="184.6" stroke="#1f1f1f" stroke-width="1"/>
<text x="1133.8" y="243.3" font-size="15.5" fill="#1f1f1f" font-weight="bold" textLength="130.6" lengthAdjust="spacingAndGlyphs">Top/Bottom Rules</text>
<text x="1133.8" y="308" font-size="15.5" fill="#1f1f1f" font-weight="bold" textLength="66" lengthAdjust="spacingAndGlyphs">Data Bars</text>
<text x="1133.8" y="369" font-size="15.5" fill="#1f1f1f" font-weight="bold" textLength="85.3" lengthAdjust="spacingAndGlyphs">Color Scales</text>
<text x="1133.8" y="428.3" font-size="15.5" fill="#1f1f1f" font-weight="bold" textLength="64" lengthAdjust="spacingAndGlyphs">Icon Sets</text>
<path d="M1294.0 167.1 L1299.6 172.7 L1294.0 178.29999999999998" fill="none" stroke="#333" stroke-width="1.5" stroke-linecap="round" stroke-linejoin="round"/>
<path d="M1294.0 227.9 L1299.6 233.5 L1294.0 239.1" fill="none" stroke="#333" stroke-width="1.5" stroke-linecap="round" stroke-linejoin="round"/>
<path d="M1294.0 292.4 L1299.6 298 L1294.0 303.6" fill="none" stroke="#333" stroke-width="1.5" stroke-linecap="round" stroke-linejoin="round"/>
<path d="M1294.0 352.4 L1299.6 358 L1294.0 363.6" fill="none" stroke="#333" stroke-width="1.5" stroke-linecap="round" stroke-linejoin="round"/>
<path d="M1294.0 412.9 L1299.6 418.5 L1294.0 424.1" fill="none" stroke="#333" stroke-width="1.5" stroke-linecap="round" stroke-linejoin="round"/>
<path d="M1294.0 505.09999999999997 L1299.6 510.7 L1294.0 516.3" fill="none" stroke="#333" stroke-width="1.5" stroke-linecap="round" stroke-linejoin="round"/>
<text x="1112" y="480.4" font-size="15.5" fill="#333" textLength="75" lengthAdjust="spacingAndGlyphs">New Rule...</text>
<line x1="1133.6" y1="244.8" x2="1143.5" y2="244.8" stroke="#333" stroke-width="1"/>
<line x1="1134" y1="309.5" x2="1144.5" y2="309.5" stroke="#333" stroke-width="1"/>
<line x1="1175.3" y1="370.5" x2="1184" y2="370.5" stroke="#333" stroke-width="1"/>
<line x1="1133.8" y1="429.8" x2="1137.5" y2="429.8" stroke="#333" stroke-width="1"/>
<line x1="1112" y1="481.9" x2="1123.5" y2="481.9" stroke="#333" stroke-width="1"/>
<line x1="1112" y1="519.3" x2="1122.5" y2="519.3" stroke="#333" stroke-width="1"/>
<line x1="1172.5" y1="557.3" x2="1180.5" y2="557.3" stroke="#333" stroke-width="1"/>
<text x="1112" y="517.8" font-size="15.5" fill="#333" textLength="74.6" lengthAdjust="spacingAndGlyphs">Clear Rules</text>
<text x="1112.6" y="555.8" font-size="15.5" fill="#333" textLength="106.4" lengthAdjust="spacingAndGlyphs">Manage Rules...</text>
<rect x="1096" y="168.4" width="15.8" height="8.3" fill="#f6cf6a"/>
<line x1="1088.8" y1="161" x2="1088.8" y2="184" stroke="#333" stroke-width="1.0"/>
<line x1="1096" y1="161" x2="1096" y2="184" stroke="#333" stroke-width="1.0"/>
<line x1="1103.5" y1="161" x2="1103.5" y2="184" stroke="#333" stroke-width="1.0"/>
<line x1="1111.8" y1="161" x2="1111.8" y2="184" stroke="#333" stroke-width="1.0"/>
<line x1="1119.1" y1="161" x2="1119.1" y2="184" stroke="#333" stroke-width="1.0"/>
<line x1="1088.8" y1="161" x2="1119.1" y2="161" stroke="#333" stroke-width="1.0"/>
<line x1="1088.8" y1="168.4" x2="1119.1" y2="168.4" stroke="#333" stroke-width="1.0"/>
<line x1="1088.8" y1="176.7" x2="1119.1" y2="176.7" stroke="#333" stroke-width="1.0"/>
<line x1="1088.8" y1="184" x2="1119.1" y2="184" stroke="#333" stroke-width="1.0"/>
<rect x="1102.5" y="175.9" width="18.6" height="13.4" fill="#fff" stroke="#333" stroke-width="1.2"/>
<path d="M1115 179.5 L1108.5 182 L1115 184.5 M1108.5 186.5 H1115" fill="none" stroke="#333" stroke-width="1"/>
<rect x="1096" y="221.3" width="15.8" height="23.4" fill="#f6cf6a"/>
<line x1="1088.8" y1="221.3" x2="1088.8" y2="244.7" stroke="#333" stroke-width="1.0"/>
<line x1="1096" y1="221.3" x2="1096" y2="244.7" stroke="#333" stroke-width="1.0"/>
<line x1="1103.5" y1="221.3" x2="1103.5" y2="244.7" stroke="#333" stroke-width="1.0"/>
<line x1="1111.8" y1="221.3" x2="1111.8" y2="244.7" stroke="#333" stroke-width="1.0"/>
<line x1="1119.1" y1="221.3" x2="1119.1" y2="244.7" stroke="#333" stroke-width="1.0"/>
<line x1="1088.8" y1="221.3" x2="1119.1" y2="221.3" stroke="#333" stroke-width="1.0"/>
<line x1="1088.8" y1="229" x2="1119.1" y2="229" stroke="#333" stroke-width="1.0"/>
<line x1="1088.8" y1="237" x2="1119.1" y2="237" stroke="#333" stroke-width="1.0"/>
<line x1="1088.8" y1="244.7" x2="1119.1" y2="244.7" stroke="#333" stroke-width="1.0"/>
<path d="M1103.5 235 V223.8 M1100 227.5 L1103.5 223.8 L1107 227.5" fill="none" stroke="#333" stroke-width="1.2"/>
<rect x="1102.5" y="235.7" width="18.5" height="14.5" fill="#fff" stroke="#333" stroke-width="1.2"/>
<text x="1105" y="247.8" font-size="10.5" fill="#333" textLength="11.5" lengthAdjust="spacingAndGlyphs">10</text>
<rect x="1088.8" y="286" width="7.5" height="24" fill="#cde5f8"/>
<rect x="1094.3" y="286.8" width="9.3" height="7" fill="#4a9ae0"/>
<rect x="1094.3" y="294.2" width="6.3" height="7.6" fill="#4a9ae0"/>
<rect x="1094.3" y="302" width="7.5" height="7.5" fill="#4a9ae0"/>
<line x1="1088.8" y1="286" x2="1088.8" y2="310" stroke="#333" stroke-width="1.0"/>
<line x1="1094.3" y1="286" x2="1094.3" y2="310" stroke="#333" stroke-width="1.0"/>
<line x1="1111.8" y1="286" x2="1111.8" y2="310" stroke="#333" stroke-width="1.0"/>
<line x1="1119.1" y1="286" x2="1119.1" y2="310" stroke="#333" stroke-width="1.0"/>
<line x1="1088.8" y1="286" x2="1119.1" y2="286" stroke="#333" stroke-width="1.0"/>
<line x1="1088.8" y1="294" x2="1119.1" y2="294" stroke="#333" stroke-width="1.0"/>
<line x1="1088.8" y1="302" x2="1119.1" y2="302" stroke="#333" stroke-width="1.0"/>
<line x1="1088.8" y1="310" x2="1119.1" y2="310" stroke="#333" stroke-width="1.0"/>
<rect x="1093.7" y="346.4" width="21.1" height="7.6" fill="#63a4e8"/>
<rect x="1093.7" y="354.2" width="21.1" height="7.6" fill="#f7cd7c"/>
<rect x="1093.7" y="362" width="21.1" height="7.6" fill="#f07272"/>
<line x1="1088.7" y1="346.2" x2="1088.7" y2="369.8" stroke="#333" stroke-width="1.0"/>
<line x1="1093.7" y1="346.2" x2="1093.7" y2="369.8" stroke="#333" stroke-width="1.0"/>
<line x1="1114.8" y1="346.2" x2="1114.8" y2="369.8" stroke="#333" stroke-width="1.0"/>
<line x1="1119.8" y1="346.2" x2="1119.8" y2="369.8" stroke="#333" stroke-width="1.0"/>
<line x1="1088.7" y1="346.2" x2="1119.8" y2="346.2" stroke="#333" stroke-width="1.0"/>
<line x1="1088.7" y1="354" x2="1119.8" y2="354" stroke="#333" stroke-width="1.0"/>
<line x1="1088.7" y1="362" x2="1119.8" y2="362" stroke="#333" stroke-width="1.0"/>
<line x1="1088.7" y1="369.8" x2="1119.8" y2="369.8" stroke="#333" stroke-width="1.0"/>
<line x1="1088.7" y1="407" x2="1088.7" y2="430.8" stroke="#333" stroke-width="1.0"/>
<line x1="1119.8" y1="407" x2="1119.8" y2="430.8" stroke="#333" stroke-width="1.0"/>
<line x1="1088.7" y1="407" x2="1119.8" y2="407" stroke="#333" stroke-width="1.0"/>
<line x1="1088.7" y1="415" x2="1119.8" y2="415" stroke="#333" stroke-width="1.0"/>
<line x1="1088.7" y1="423" x2="1119.8" y2="423" stroke="#333" stroke-width="1.0"/>
<line x1="1088.7" y1="430.8" x2="1119.8" y2="430.8" stroke="#333" stroke-width="1.0"/>
<line x1="1093.7" y1="407" x2="1093.7" y2="430.8" stroke="#333" stroke-width="1.2"/>
<circle cx="1098" cy="411" r="1.6" fill="#555"/>
<line x1="1108" y1="411" x2="1115" y2="411" stroke="#555" stroke-width="1"/>
<circle cx="1098" cy="419" r="1.6" fill="#555"/>
<line x1="1108" y1="419" x2="1115" y2="419" stroke="#555" stroke-width="1"/>
<circle cx="1098" cy="427" r="1.6" fill="#555"/>
<line x1="1108" y1="427" x2="1115" y2="427" stroke="#555" stroke-width="1"/>
<rect x="1087.3899999999999" y="465" width="7.82" height="14.600000000000023" fill="#f3cf72"/>
<line x1="1082.8" y1="468.65" x2="1099.8" y2="468.65" stroke="#ffffff" stroke-width="1"/>
<line x1="1082.8" y1="472.3" x2="1099.8" y2="472.3" stroke="#ffffff" stroke-width="1"/>
<line x1="1082.8" y1="475.95000000000005" x2="1099.8" y2="475.95000000000005" stroke="#ffffff" stroke-width="1"/>
<line x1="1087.3899999999999" y1="465" x2="1087.3899999999999" y2="479.6" stroke="#555" stroke-width="0.9"/>
<line x1="1095.21" y1="465" x2="1095.21" y2="479.6" stroke="#555" stroke-width="0.9"/>
<rect x="1082.8" y="465" width="17.0" height="14.600000000000023" fill="none" stroke="#333" stroke-width="1.4"/>
<rect x="1087.3899999999999" y="503" width="7.82" height="14.399999999999977" fill="#f3cf72"/>
<line x1="1082.8" y1="506.6" x2="1099.8" y2="506.6" stroke="#ffffff" stroke-width="1"/>
<line x1="1082.8" y1="510.2" x2="1099.8" y2="510.2" stroke="#ffffff" stroke-width="1"/>
<line x1="1082.8" y1="513.8" x2="1099.8" y2="513.8" stroke="#ffffff" stroke-width="1"/>
<line x1="1087.3899999999999" y1="503" x2="1087.3899999999999" y2="517.4" stroke="#555" stroke-width="0.9"/>
<line x1="1095.21" y1="503" x2="1095.21" y2="517.4" stroke="#555" stroke-width="0.9"/>
<rect x="1082.8" y="503" width="17.0" height="14.399999999999977" fill="none" stroke="#333" stroke-width="1.4"/>
<path d="M1089.5 516.5 L1097.5 508.5 Q1099 507 1100.5 508.5 L1101.5 509.5 Q1103 511 1101.5 512.5 L1093.5 520.5 Z" fill="#9b5fcf" stroke="#ffffff" stroke-width="1"/>
<path d="M1082.5 554 V539.5 H1097.5" fill="none" stroke="#444" stroke-width="1.2"/>
<rect x="1088.685" y="541.2" width="7.13" height="14.399999999999977" fill="#f3cf72"/>
<line x1="1084.5" y1="544.8000000000001" x2="1100" y2="544.8000000000001" stroke="#ffffff" stroke-width="1"/>
<line x1="1084.5" y1="548.4000000000001" x2="1100" y2="548.4000000000001" stroke="#ffffff" stroke-width="1"/>
<line x1="1084.5" y1="552.0" x2="1100" y2="552.0" stroke="#ffffff" stroke-width="1"/>
<line x1="1088.685" y1="541.2" x2="1088.685" y2="555.6" stroke="#555" stroke-width="0.9"/>
<line x1="1095.815" y1="541.2" x2="1095.815" y2="555.6" stroke="#555" stroke-width="0.9"/>
<rect x="1084.5" y="541.2" width="15.5" height="14.399999999999977" fill="none" stroke="#333" stroke-width="1.4"/>
<path d="M1234.5 367.5 V380 L1237.5 377 L1240 382 L1241.8 381.2 L1239.3 376.3 L1243.5 376 Z" fill="#fff" stroke="#222" stroke-width="1"/>
<g filter="url(#sh)">
<rect x="1312.4" y="329.8" width="165.4" height="156.2" rx="4" fill="#fff" stroke="#d6d6d6" stroke-width="1"/>
</g>
<line x1="1313" y1="443.2" x2="1475" y2="443.2" stroke="#e2e2e2" stroke-width="1.2"/>
<text x="1359.6" y="472" font-size="15.5" fill="#333" textLength="87.2" lengthAdjust="spacingAndGlyphs">More Rules...</text>
<line x1="1359.6" y1="473.5" x2="1373.5" y2="473.5" stroke="#333" stroke-width="1"/>
<linearGradient id="g00" x1="0" y1="0" x2="0" y2="1"><stop offset="0" stop-color="#63be7b"/><stop offset="0.5" stop-color="#ffeb84"/><stop offset="1" stop-color="#f8696b"/></linearGradient>
<rect x="1324.1" y="338.7" width="12.6" height="19" fill="url(#g00)"/>
<rect x="1320.1" y="338.7" width="20.6" height="19" fill="none" stroke="#777" stroke-width="1"/>
<line x1="1320.1" y1="342.5" x2="1340.6999999999998" y2="342.5" stroke="#8c8c8c" stroke-width="0.7" opacity="0.8"/>
<line x1="1320.1" y1="346.3" x2="1340.6999999999998" y2="346.3" stroke="#8c8c8c" stroke-width="0.7" opacity="0.8"/>
<line x1="1320.1" y1="350.09999999999997" x2="1340.6999999999998" y2="350.09999999999997" stroke="#8c8c8c" stroke-width="0.7" opacity="0.8"/>
<line x1="1320.1" y1="353.9" x2="1340.6999999999998" y2="353.9" stroke="#8c8c8c" stroke-width="0.7" opacity="0.8"/>
<line x1="1324.1" y1="338.7" x2="1324.1" y2="357.7" stroke="#888" stroke-width="0.8"/>
<line x1="1336.6999999999998" y1="338.7" x2="1336.6999999999998" y2="357.7" stroke="#888" stroke-width="0.8"/>
<linearGradient id="g01" x1="0" y1="0" x2="0" y2="1"><stop offset="0" stop-color="#f8696b"/><stop offset="0.5" stop-color="#ffeb84"/><stop offset="1" stop-color="#63be7b"/></linearGradient>
<rect x="1357.7" y="338.7" width="12.6" height="19" fill="url(#g01)"/>
<rect x="1353.7" y="338.7" width="20.6" height="19" fill="none" stroke="#777" stroke-width="1"/>
<line x1="1353.7" y1="342.5" x2="1374.3" y2="342.5" stroke="#8c8c8c" stroke-width="0.7" opacity="0.8"/>
<line x1="1353.7" y1="346.3" x2="1374.3" y2="346.3" stroke="#8c8c8c" stroke-width="0.7" opacity="0.8"/>
<line x1="1353.7" y1="350.09999999999997" x2="1374.3" y2="350.09999999999997" stroke="#8c8c8c" stroke-width="0.7" opacity="0.8"/>
<line x1="1353.7" y1="353.9" x2="1374.3" y2="353.9" stroke="#8c8c8c" stroke-width="0.7" opacity="0.8"/>
<line x1="1357.7" y1="338.7" x2="1357.7" y2="357.7" stroke="#888" stroke-width="0.8"/>
<line x1="1370.3" y1="338.7" x2="1370.3" y2="357.7" stroke="#888" stroke-width="0.8"/>
<linearGradient id="g02" x1="0" y1="0" x2="0" y2="1"><stop offset="0" stop-color="#63be7b"/><stop offset="0.5" stop-color="#ffffff"/><stop offset="1" stop-color="#f8696b"/></linearGradient>
<rect x="1391.2" y="338.7" width="12.6" height="19" fill="url(#g02)"/>
<rect x="1387.2" y="338.7" width="20.6" height="19" fill="none" stroke="#777" stroke-width="1"/>
<line x1="1387.2" y1="342.5" x2="1407.8" y2="342.5" stroke="#8c8c8c" stroke-width="0.7" opacity="0.8"/>
<line x1="1387.2" y1="346.3" x2="1407.8" y2="346.3" stroke="#8c8c8c" stroke-width="0.7" opacity="0.8"/>
<line x1="1387.2" y1="350.09999999999997" x2="1407.8" y2="350.09999999999997" stroke="#8c8c8c" stroke-width="0.7" opacity="0.8"/>
<line x1="1387.2" y1="353.9" x2="1407.8" y2="353.9" stroke="#8c8c8c" stroke-width="0.7" opacity="0.8"/>
<line x1="1391.2" y1="338.7" x2="1391.2" y2="357.7" stroke="#888" stroke-width="0.8"/>
<line x1="1403.8" y1="338.7" x2="1403.8" y2="357.7" stroke="#888" stroke-width="0.8"/>
<linearGradient id="g03" x1="0" y1="0" x2="0" y2="1"><stop offset="0" stop-color="#f8696b"/><stop offset="0.5" stop-color="#ffffff"/><stop offset="1" stop-color="#63be7b"/></linearGradient>
<rect x="1424.2" y="338.7" width="12.6" height="19" fill="url(#g03)"/>
<rect x="1420.2" y="338.7" width="20.6" height="19" fill="none" stroke="#777" stroke-width="1"/>
<line x1="1420.2" y1="342.5" x2="1440.8" y2="342.5" stroke="#8c8c8c" stroke-width="0.7" opacity="0.8"/>
<line x1="1420.2" y1="346.3" x2="1440.8" y2="346.3" stroke="#8c8c8c" stroke-width="0.7" opacity="0.8"/>
<line x1="1420.2" y1="350.09999999999997" x2="1440.8" y2="350.09999999999997" stroke="#8c8c8c" stroke-width="0.7" opacity="0.8"/>
<line x1="1420.2" y1="353.9" x2="1440.8" y2="353.9" stroke="#8c8c8c" stroke-width="0.7" opacity="0.8"/>
<line x1="1424.2" y1="338.7" x2="1424.2" y2="357.7" stroke="#888" stroke-width="0.8"/>
<line x1="1436.8" y1="338.7" x2="1436.8" y2="357.7" stroke="#888" stroke-width="0.8"/>
<linearGradient id="g10" x1="0" y1="0" x2="0" y2="1"><stop offset="0" stop-color="#5a8ac6"/><stop offset="0.5" stop-color="#ffffff"/><stop offset="1" stop-color="#f8696b"/></linearGradient>
<rect x="1324.1" y="372.2" width="12.6" height="19" fill="url(#g10)"/>
<rect x="1320.1" y="372.2" width="20.6" height="19" fill="none" stroke="#777" stroke-width="1"/>
<line x1="1320.1" y1="376.0" x2="1340.6999999999998" y2="376.0" stroke="#8c8c8c" stroke-width="0.7" opacity="0.8"/>
<line x1="1320.1" y1="379.8" x2="1340.6999999999998" y2="379.8" stroke="#8c8c8c" stroke-width="0.7" opacity="0.8"/>
<line x1="1320.1" y1="383.59999999999997" x2="1340.6999999999998" y2="383.59999999999997" stroke="#8c8c8c" stroke-width="0.7" opacity="0.8"/>
<line x1="1320.1" y1="387.4" x2="1340.6999999999998" y2="387.4" stroke="#8c8c8c" stroke-width="0.7" opacity="0.8"/>
<line x1="1324.1" y1="372.2" x2="1324.1" y2="391.2" stroke="#888" stroke-width="0.8"/>
<line x1="1336.6999999999998" y1="372.2" x2="1336.6999999999998" y2="391.2" stroke="#888" stroke-width="0.8"/>
<linearGradient id="g11" x1="0" y1="0" x2="0" y2="1"><stop offset="0" stop-color="#f8696b"/><stop offset="0.5" stop-color="#ffffff"/><stop offset="1" stop-color="#5a8ac6"/></linearGradient>
<rect x="1357.7" y="372.2" width="12.6" height="19" fill="url(#g11)"/>
<rect x="1353.7" y="372.2" width="20.6" height="19" fill="none" stroke="#777" stroke-width="1"/>
<line x1="1353.7" y1="376.0" x2="1374.3" y2="376.0" stroke="#8c8c8c" stroke-width="0.7" opacity="0.8"/>
<line x1="1353.7" y1="379.8" x2="1374.3" y2="379.8" stroke="#8c8c8c" stroke-width="0.7" opacity="0.8"/>
<line x1="1353.7" y1="383.59999999999997" x2="1374.3" y2="383.59999999999997" stroke="#8c8c8c" stroke-width="0.7" opacity="0.8"/>
<line x1="1353.7" y1="387.4" x2="1374.3" y2="387.4" stroke="#8c8c8c" stroke-width="0.7" opacity="0.8"/>
<line x1="1357.7" y1="372.2" x2="1357.7" y2="391.2" stroke="#888" stroke-width="0.8"/>
<line x1="1370.3" y1="372.2" x2="1370.3" y2="391.2" stroke="#888" stroke-width="0.8"/>
<linearGradient id="g12" x1="0" y1="0" x2="0" y2="1"><stop offset="0" stop-color="#ffffff"/><stop offset="0.5" stop-color="#ffffff"/><stop offset="1" stop-color="#f8696b"/></linearGradient>
<rect x="1391.2" y="372.2" width="12.6" height="19" fill="url(#g12)"/>
<rect x="1387.2" y="372.2" width="20.6" height="19" fill="none" stroke="#777" stroke-width="1"/>
<line x1="1387.2" y1="376.0" x2="1407.8" y2="376.0" stroke="#8c8c8c" stroke-width="0.7" opacity="0.8"/>
<line x1="1387.2" y1="379.8" x2="1407.8" y2="379.8" stroke="#8c8c8c" stroke-width="0.7" opacity="0.8"/>
<line x1="1387.2" y1="383.59999999999997" x2="1407.8" y2="383.59999999999997" stroke="#8c8c8c" stroke-width="0.7" opacity="0.8"/>
<line x1="1387.2" y1="387.4" x2="1407.8" y2="387.4" stroke="#8c8c8c" stroke-width="0.7" opacity="0.8"/>
<line x1="1391.2" y1="372.2" x2="1391.2" y2="391.2" stroke="#888" stroke-width="0.8"/>
<line x1="1403.8" y1="372.2" x2="1403.8" y2="391.2" stroke="#888" stroke-width="0.8"/>
<linearGradient id="g13" x1="0" y1="0" x2="0" y2="1"><stop offset="0" stop-color="#f8696b"/><stop offset="0.5" stop-color="#ffffff"/><stop offset="1" stop-color="#ffffff"/></linearGradient>
<rect x="1424.2" y="372.2" width="12.6" height="19" fill="url(#g13)"/>
<rect x="1420.2" y="372.2" width="20.6" height="19" fill="none" stroke="#777" stroke-width="1"/>
<line x1="1420.2" y1="376.0" x2="1440.8" y2="376.0" stroke="#8c8c8c" stroke-width="0.7" opacity="0.8"/>
<line x1="1420.2" y1="379.8" x2="1440.8" y2="379.8" stroke="#8c8c8c" stroke-width="0.7" opacity="0.8"/>
<line x1="1420.2" y1="383.59999999999997" x2="1440.8" y2="383.59999999999997" stroke="#8c8c8c" stroke-width="0.7" opacity="0.8"/>
<line x1="1420.2" y1="387.4" x2="1440.8" y2="387.4" stroke="#8c8c8c" stroke-width="0.7" opacity="0.8"/>
<line x1="1424.2" y1="372.2" x2="1424.2" y2="391.2" stroke="#888" stroke-width="0.8"/>
<line x1="1436.8" y1="372.2" x2="1436.8" y2="391.2" stroke="#888" stroke-width="0.8"/>
<linearGradient id="g20" x1="0" y1="0" x2="0" y2="1"><stop offset="0" stop-color="#63be7b"/><stop offset="0.5" stop-color="#ffffff"/><stop offset="1" stop-color="#ffffff"/></linearGradient>
<rect x="1324.1" y="405.2" width="12.6" height="19" fill="url(#g20)"/>
<rect x="1320.1" y="405.2" width="20.6" height="19" fill="none" stroke="#777" stroke-width="1"/>
<line x1="1320.1" y1="409.0" x2="1340.6999999999998" y2="409.0" stroke="#8c8c8c" stroke-width="0.7" opacity="0.8"/>
<line x1="1320.1" y1="412.8" x2="1340.6999999999998" y2="412.8" stroke="#8c8c8c" stroke-width="0.7" opacity="0.8"/>
<line x1="1320.1" y1="416.59999999999997" x2="1340.6999999999998" y2="416.59999999999997" stroke="#8c8c8c" stroke-width="0.7" opacity="0.8"/>
<line x1="1320.1" y1="420.4" x2="1340.6999999999998" y2="420.4" stroke="#8c8c8c" stroke-width="0.7" opacity="0.8"/>
<line x1="1324.1" y1="405.2" x2="1324.1" y2="424.2" stroke="#888" stroke-width="0.8"/>
<line x1="1336.6999999999998" y1="405.2" x2="1336.6999999999998" y2="424.2" stroke="#888" stroke-width="0.8"/>
<linearGradient id="g21" x1="0" y1="0" x2="0" y2="1"><stop offset="0" stop-color="#ffffff"/><stop offset="0.5" stop-color="#ffffff"/><stop offset="1" stop-color="#63be7b"/></linearGradient>
<rect x="1357.7" y="405.2" width="12.6" height="19" fill="url(#g21)"/>
<rect x="1353.7" y="405.2" width="20.6" height="19" fill="none" stroke="#777" stroke-width="1"/>
<line x1="1353.7" y1="409.0" x2="1374.3" y2="409.0" stroke="#8c8c8c" stroke-width="0.7" opacity="0.8"/>
<line x1="1353.7" y1="412.8" x2="1374.3" y2="412.8" stroke="#8c8c8c" stroke-width="0.7" opacity="0.8"/>
<line x1="1353.7" y1="416.59999999999997" x2="1374.3" y2="416.59999999999997" stroke="#8c8c8c" stroke-width="0.7" opacity="0.8"/>
<line x1="1353.7" y1="420.4" x2="1374.3" y2="420.4" stroke="#8c8c8c" stroke-width="0.7" opacity="0.8"/>
<line x1="1357.7" y1="405.2" x2="1357.7" y2="424.2" stroke="#888" stroke-width="0.8"/>
<line x1="1370.3" y1="405.2" x2="1370.3" y2="424.2" stroke="#888" stroke-width="0.8"/>
<linearGradient id="g22" x1="0" y1="0" x2="0" y2="1"><stop offset="0" stop-color="#63be7b"/><stop offset="0.5" stop-color="#ffeb84"/><stop offset="1" stop-color="#ffeb84"/></linearGradient>
<rect x="1391.2" y="405.2" width="12.6" height="19" fill="url(#g22)"/>
<rect x="1387.2" y="405.2" width="20.6" height="19" fill="none" stroke="#777" stroke-width="1"/>
<line x1="1387.2" y1="409.0" x2="1407.8" y2="409.0" stroke="#8c8c8c" stroke-width="0.7" opacity="0.8"/>
<line x1="1387.2" y1="412.8" x2="1407.8" y2="412.8" stroke="#8c8c8c" stroke-width="0.7" opacity="0.8"/>
<line x1="1387.2" y1="416.59999999999997" x2="1407.8" y2="416.59999999999997" stroke="#8c8c8c" stroke-width="0.7" opacity="0.8"/>
<line x1="1387.2" y1="420.4" x2="1407.8" y2="420.4" stroke="#8c8c8c" stroke-width="0.7" opacity="0.8"/>
<line x1="1391.2" y1="405.2" x2="1391.2" y2="424.2" stroke="#888" stroke-width="0.8"/>
<line x1="1403.8" y1="405.2" x2="1403.8" y2="424.2" stroke="#888" stroke-width="0.8"/>
<linearGradient id="g23" x1="0" y1="0" x2="0" y2="1"><stop offset="0" stop-color="#ffeb84"/><stop offset="0.5" stop-color="#ffeb84"/><stop offset="1" stop-color="#63be7b"/></linearGradient>
<rect x="1424.2" y="405.2" width="12.6" height="19" fill="url(#g23)"/>
<rect x="1420.2" y="405.2" width="20.6" height="19" fill="none" stroke="#777" stroke-width="1"/>
<line x1="1420.2" y1="409.0" x2="1440.8" y2="409.0" stroke="#8c8c8c" stroke-width="0.7" opacity="0.8"/>
<line x1="1420.2" y1="412.8" x2="1440.8" y2="412.8" stroke="#8c8c8c" stroke-width="0.7" opacity="0.8"/>
<line x1="1420.2" y1="416.59999999999997" x2="1440.8" y2="416.59999999999997" stroke="#8c8c8c" stroke-width="0.7" opacity="0.8"/>
<line x1="1420.2" y1="420.4" x2="1440.8" y2="420.4" stroke="#8c8c8c" stroke-width="0.7" opacity="0.8"/>
<line x1="1424.2" y1="405.2" x2="1424.2" y2="424.2" stroke="#888" stroke-width="0.8"/>
<line x1="1436.8" y1="405.2" x2="1436.8" y2="424.2" stroke="#888" stroke-width="0.8"/>
<path d="M1408.4 94 H1453.6 V242.2 H1479.5 L1431 321 L1382.5 242.2 H1408.4 Z" fill="#1b3fae" stroke="none" stroke-width="1"/>
</svg></body></html>
